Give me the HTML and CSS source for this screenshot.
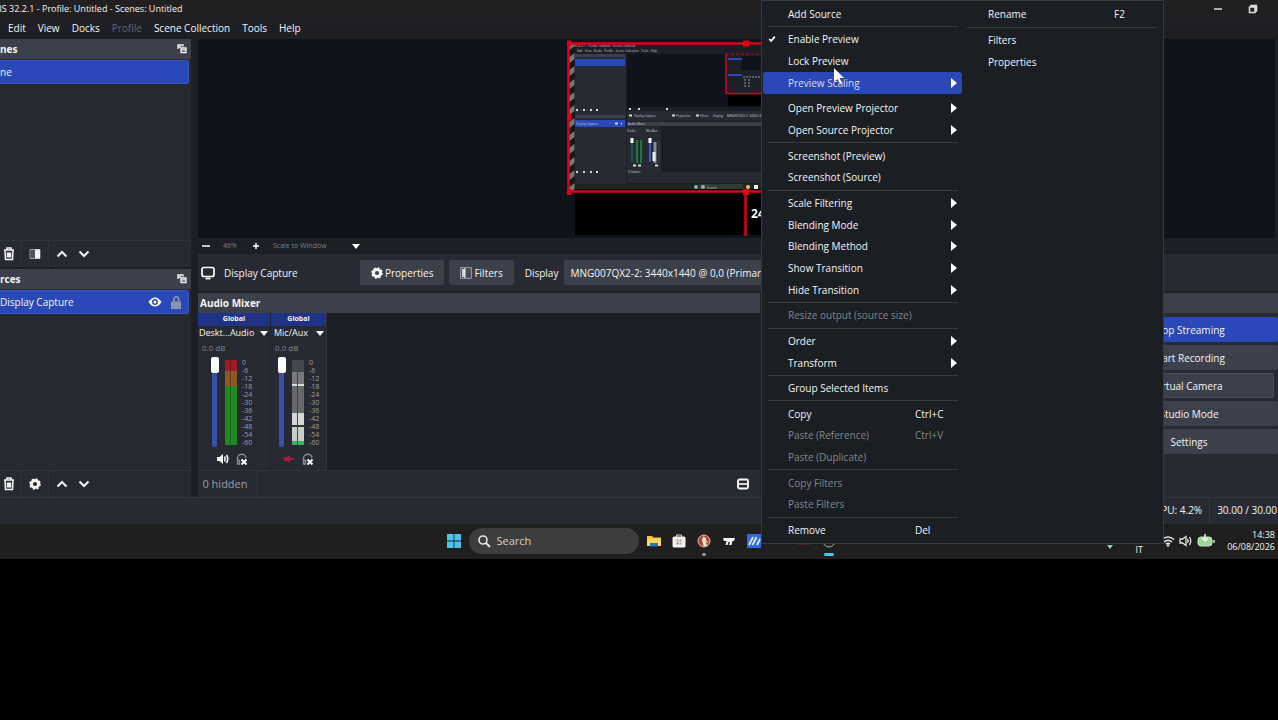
FILE: index.html
```
<!DOCTYPE html>
<html lang="en">
<head>
    <meta charset="utf-8">
    <title>OBS 32.2.1</title>
    <link rel="stylesheet" href="styles.css">
</head>
<body>
    <!-- shared icons -->
    <svg class="sprite" aria-hidden="true">
        <symbol id="i-float" viewBox="0 0 10 10"><path d="M1 5V1h5v1.500M1 3h3M4 8.500V4h5v4.500zM4 5.800h5" fill="none" stroke="currentColor" stroke-width="1.300"/></symbol>
        <symbol id="i-trash" viewBox="0 0 12 14"><path d="M1 3h10M4 3V1h4v2M2 3.500l.5 9h7l.5-9M4.500 5.500v5M7.500 5.500v5M6 5.500v5" fill="none" stroke="currentColor" stroke-width="1.500"/></symbol>
        <symbol id="i-filter" viewBox="0 0 12 12"><path d="M.7.700h10.600v10.600H.7z" fill="none" stroke="currentColor" stroke-opacity=".6"/><path d="M2 2h3v8H2z" fill="currentColor" opacity=".8"/><path d="M6 1.500h5v9H6z" fill="#4a4e59"/><path d="M5 1v10" stroke="currentColor"/></symbol>
        <symbol id="i-panel" viewBox="0 0 12 12"><path d="M1 1.500h10v9H1z" fill="none" stroke="#9a9da4"/><path d="M2 2h4v8H2z" fill="#50545d"/><path d="M6 1.500h5v9H6z" fill="currentColor"/></symbol>
        <symbol id="i-up" viewBox="0 0 12 12"><path d="M1.500 8.500L6 4l4.500 4.500" fill="none" stroke="currentColor" stroke-width="2"/></symbol>
        <symbol id="i-down" viewBox="0 0 12 12"><path d="M1.500 3.500L6 8l4.500-4.500" fill="none" stroke="currentColor" stroke-width="2"/></symbol>
        <symbol id="i-gear" viewBox="0 0 12 12"><circle cx="6" cy="6" r="3.600" fill="none" stroke="currentColor" stroke-width="3"/><circle cx="6" cy="6" r="5" fill="none" stroke="currentColor" stroke-width="1.600" stroke-dasharray="2 1.930"/></symbol>
        <symbol id="i-head" viewBox="0 0 12 12"><path d="M1.500 10V6a4 4 0 0 1 8.500-1M1.500 7v4h2V7.500z" fill="none" stroke="#8a8d94" stroke-width="1.400"/><path d="M5.500 6.500l5 5m0-5l-5 5" stroke="#fff" stroke-width="2"/></symbol>
        <symbol id="i-speaker" viewBox="0 0 14 12"><path d="M1 4h2.500L7 1v10L3.500 8H1z" fill="currentColor"/><path d="M8.500 3.500q1.500 2.500 0 5M10.500 2q2.500 4 0 8" fill="none" stroke="currentColor" stroke-width="1.600"/></symbol>
    </svg>

    <div class="desktop">
        <header class="titlebar">
            <span class="title">BS 32.2.1 - Profile: Untitled - Scenes: Untitled</span>
            <button class="win-btn" aria-label="Minimize"><svg width="10" height="10" viewBox="0 0 10 10"><path d="M1 5h8" stroke="#ddd" stroke-width="1.500"/></svg></button>
            <button class="win-btn" aria-label="Restore"><svg width="10" height="10" viewBox="0 0 10 10"><path d="M1.500 3h5.500v5.500H1.500zM3 2.500V1.500h5.500V7H7.500" fill="none" stroke="#ddd" stroke-width="1.500"/></svg></button>
        </header>

        <nav class="menubar">
            <button>Edit</button>
            <button>View</button>
            <button>Docks</button>
            <button disabled>Profile</button>
            <button>Scene Collection</button>
            <button>Tools</button>
            <button>Help</button>
        </nav>

        <main class="work">
            <div class="side">
                <section class="dock">
                    <h2 class="dock-title">nes <svg width="10" height="10"><use href="#i-float"/></svg></h2>
                    <div class="list scenes-list">
                        <div class="row">ne</div>
                    </div>
                    <div class="tools">
                        <button aria-label="Remove scene"><svg width="12" height="14"><use href="#i-trash"/></svg></button>
                        <button aria-label="Scene filters"><svg width="12" height="12"><use href="#i-panel"/></svg></button>
                        <button class="arrow" aria-label="Move up"><svg width="12" height="12"><use href="#i-up"/></svg></button>
                        <button class="arrow" aria-label="Move down"><svg width="12" height="12"><use href="#i-down"/></svg></button>
                    </div>
                </section>
                <section class="dock">
                    <h2 class="dock-title">rces <svg width="10" height="10"><use href="#i-float"/></svg></h2>
                    <div class="list sources-list">
                        <div class="row">
                            <span class="row-name">Display Capture</span>
                            <button aria-label="Visible"><svg width="14" height="10" viewBox="0 0 14 10"><path d="M.5 5Q3.500.500 7 .5T13.500 5Q10.500 9.500 7 9.500T.5 5z" fill="#fff"/><circle cx="7" cy="5" r="3" fill="#2b48b8"/><circle cx="7" cy="5" r="1.500" fill="#fff"/></svg></button>
                            <button aria-label="Lock"><svg width="12" height="14" viewBox="0 0 12 14"><path d="M1 6.500h10V14H1z" fill="#8d93ab"/><path d="M4 7V4a2.300 2.300 0 0 1 4.600 0v3" fill="none" stroke="#8d93ab" stroke-width="1.600"/></svg></button>
                        </div>
                    </div>
                    <div class="tools">
                        <button aria-label="Remove source"><svg width="12" height="14"><use href="#i-trash"/></svg></button>
                        <button aria-label="Source properties"><svg width="12" height="12"><use href="#i-gear"/></svg></button>
                        <button class="arrow" aria-label="Move up"><svg width="12" height="12"><use href="#i-up"/></svg></button>
                        <button class="arrow" aria-label="Move down"><svg width="12" height="12"><use href="#i-down"/></svg></button>
                    </div>
                </section>
            </div>

            <div class="center">
                <div class="preview">
                    <svg class="canvas" width="596" height="200" viewBox="567 38 596 200">
                        <defs>
                            <pattern id="hatch" width="8" height="13" patternUnits="userSpaceOnUse"><path d="M0 0h8v13H0z" fill="#191919"/><path d="M0 6l8-6v6l-8 6z" fill="#777"/></pattern>
                        </defs>
                        <path d="M575 44h592v191H575z" fill="#000"/>
                        <path d="M575 44h592v145H575z" fill="#1b1e24"/>
                        <path d="M575 54h51v132h-51z" fill="#272b34"/>
                        <path d="M627 54h540v53H627z" fill="#10131b"/>
                        <path d="M575 54h50v3h-50zM575 115h50v3h-50zM627 122h540v4H627z" fill="#3a3f4a"/>
                        <path d="M575 59h50v7h-50zM575 120h50v7h-50z" fill="#2b48b8"/>
                        <path d="M627 111h540v10H627zM627 127h34v47h-34zM627 172h540v11H627z" fill="#262a32"/>
                        <path d="M575 184h592v5H575z" fill="#20231f"/>
                        <path d="M699 184h44v5h-44z" fill="#303c33"/>
                        <g class="mini">
                            <text x="573" y="47">BS 32.2.1 - Profile: Untitled - Scenes: Untitled</text>
                            <text x="577" y="52">Edit &#160; View &#160; Docks &#160; Profile &#160; Scene Collection &#160; Tools &#160; Help</text>
                            <text x="576" y="125">Display Capture</text>
                            <text x="634" y="117">Display Capture</text>
                            <text x="676" y="117">Properties</text>
                            <text x="700" y="117">Filters</text>
                            <text x="713" y="117">Display</text>
                            <text x="727" y="117">MNG007QX2-2: 3440x1440</text>
                            <text x="628" y="125">Audio Mixer</text>
                            <text x="627" y="132">Deskt...</text>
                            <text x="646" y="132">Mic/Aux</text>
                            <text x="628" y="173">0 hidden</text>
                            <text x="707" y="189">Search</text>
                        </g>
                        <path d="M576 110h2m5 0h2m5 0h2m4 0h2M576 172h2m5 0h2m5 0h2m4 0h2M615 123.500h3m3 0h1M633 165.500h3m2 0h3m14 0h3M629 109h2m7 0h2m26 0h2M629 115.500h3M672 115.500h3M696 115.500h3" stroke="#d5d8dc" stroke-width="2"/>
                        <path d="M632 142v20" stroke="#1d6c80"/>
                        <path d="M637 140v23M641 140v23" stroke="#1f7a3a" stroke-width="2"/>
                        <path d="M650 142v20" stroke="#3d56c0" stroke-width="2"/>
                        <path d="M655 142v21" stroke="#8b8d92" stroke-width="3"/>
                        <path d="M654 152v9" stroke="#eee" stroke-width="3"/>
                        <path d="M659 140v23" stroke="#5a5d64" stroke-dasharray="1 1"/>
                        <path d="M630.500 138h3v5h-3zM648.500 138h3v5h-3z" fill="#fff"/>
                        <circle cx="696" cy="187" r="2" fill="#7bb8b5"/><circle cx="703" cy="187" r="2" fill="#aaa"/>
                        <circle cx="748" cy="187" r="2" fill="#e8c55a"/><path d="M754 185h4v4h-4z" fill="#eee"/>
                        <path d="M726 54h80v40h-80z" fill="#1c2029"/>
                        <path d="M741 56h60v14h-60z" fill="#10131b"/>
                        <path d="M728 59h14M728 75h14" stroke="#2b48b8" stroke-width="2"/>
                        <path d="M743 77h18M745 79v9m4-9v9" stroke="#999" stroke-dasharray="2 1"/>
                        <path d="M726 54v39.500h80" fill="none" stroke="#d3001c" stroke-width="1.500"/>
                        <path d="M726 54h80" stroke="#d3001c" stroke-dasharray="3 2"/>
                        <path d="M728 95h80v11h-80z" fill="#000"/>
                        <path d="M569 44h5.500v147H569z" fill="url(#hatch)"/>
                        <path d="M1167 43.500H568.500v148H1167M745.500 191v45" fill="none" stroke="#dc0018" stroke-width="2.500"/>
                        <path d="M565.500 40.500h6v6h-6zM743 40.500h6v6h-6zM565.500 114h6v6h-6zM565.500 189h6v6h-6zM743 189h6v6h-6z" fill="#e0001a"/>
                        <text class="canvas-clock" x="751" y="218">24:00</text>
                    </svg>
                </div>
                <div class="zoombar">
                    <button aria-label="Zoom out"><svg width="8" height="8" viewBox="0 0 8 8"><path d="M0 4h8" stroke="#fff" stroke-width="1.500"/></svg></button>
                    <span class="zoom-value">46%</span>
                    <button aria-label="Zoom in"><svg width="8" height="8" viewBox="0 0 8 8"><path d="M1 4h6M4 1v6" stroke="#fff" stroke-width="1.500"/></svg></button>
                    <select aria-label="Preview scale"><option>Scale to Window</option></select>
                    <i class="caret"></i>
                </div>
                <div class="source-bar">
                    <svg width="14" height="14" viewBox="0 0 14 14"><rect x="1" y="1.500" width="12" height="9" rx="2" fill="none" stroke="#fff" stroke-width="1.700"/><path d="M4.500 12.500h5" stroke="#fff" stroke-width="1.800"/></svg>
                    <span class="source-name">Display Capture</span>
                    <button class="btn"><svg width="12" height="12"><use href="#i-gear"/></svg>Properties</button>
                    <button class="btn"><svg width="12" height="12"><use href="#i-filter"/></svg>Filters</button>
                    <label for="display">Display</label>
                    <select id="display"><option>MNG007QX2-2: 3440x1440 @ 0,0 (Primary Monitor)</option></select>
                </div>

                <div class="lower">
                    <section class="dock mixer">
                        <h2 class="dock-title">Audio Mixer</h2>
                        <div class="strips">
                            <div class="strip">
                                <div class="strip-group">Global</div>
                                <button class="strip-name">Deskt...Audio<i class="caret"></i></button>
                                <div class="db">0.0 dB</div>
                                <div class="fader">
                                    <input type="range" aria-label="Desktop Audio volume" value="100">
                                    <div class="meter meter-live"></div>
                                    <div class="scale"><span>0</span><span>-6</span><span>-12</span><span>-18</span><span>-24</span><span>-30</span><span>-36</span><span>-42</span><span>-48</span><span>-54</span><span>-60</span></div>
                                </div>
                                <div class="strip-btns">
                                    <button aria-label="Mute"><svg width="14" height="12"><use href="#i-speaker"/></svg></button>
                                    <button aria-label="Monitoring"><svg width="12" height="12"><use href="#i-head"/></svg></button>
                                </div>
                            </div>
                            <div class="strip strip-mic">
                                <div class="strip-group">Global</div>
                                <button class="strip-name">Mic/Aux<i class="caret"></i></button>
                                <div class="db">0.0 dB</div>
                                <div class="fader">
                                    <input type="range" aria-label="Mic/Aux volume" value="100">
                                    <div class="meter meter-muted"></div>
                                    <div class="scale"><span>0</span><span>-6</span><span>-12</span><span>-18</span><span>-24</span><span>-30</span><span>-36</span><span>-42</span><span>-48</span><span>-54</span><span>-60</span></div>
                                </div>
                                <div class="strip-btns">
                                    <button class="muted" aria-label="Unmute"><svg width="14" height="12" viewBox="0 0 14 12"><path d="M2 4h3l3-2v8L5 8H2zM8 5h4v2H8z" fill="currentColor"/></svg></button>
                                    <button aria-label="Monitoring"><svg width="12" height="12"><use href="#i-head"/></svg></button>
                                </div>
                            </div>
                        </div>
                        <div class="tools">
                            <button class="hidden-count">0 hidden</button>
                            <button class="layout" aria-label="Mixer layout"><svg width="12" height="12" viewBox="0 0 12 12"><rect x="1" y="1.500" width="10" height="9" rx="1.500" fill="none" stroke="#fff" stroke-width="1.800"/><path d="M2 6h8" stroke="#fff" stroke-width="1.600"/></svg></button>
                        </div>
                    </section>
                    <section class="dock transitions">
                        <h2 class="dock-title"></h2>
                    </section>
                    <section class="dock controls">
                        <h2 class="dock-title"></h2>
                        <div class="control-list">
                            <button class="btn btn-active">Stop Streaming</button>
                            <button class="btn">Start Recording</button>
                            <div class="split">
                                <button class="btn">Start Virtual Camera</button>
                            </div>
                            <button class="btn">Studio Mode</button>
                            <button class="btn">Settings</button>
                        </div>
                    </section>
                </div>
            </div>
        </main>

        <footer class="statusbar">
            <span>CPU: 4.2%</span>
            <span>30.00 / 30.00</span>
        </footer>

        <div class="taskbar">
            <div class="apps">
                <button aria-label="Start"><svg width="14" height="14" viewBox="0 0 14 14"><path d="M0 0h6.600v6.600H0zM7.400 0H14v6.600H7.400zM0 7.400h6.600V14H0zM7.400 7.400H14V14H7.400z" fill="#4cc2ee"/></svg></button>
                <label class="search">
                    <svg width="14" height="14" viewBox="0 0 14 14"><circle cx="6" cy="6" r="4" fill="none" stroke="#e6e6e6" stroke-width="1.600"/><path d="M9 9l4 4" stroke="#e6e6e6" stroke-width="1.800"/></svg>
                    <input type="text" placeholder="Search" aria-label="Search">
                </label>
                <button aria-label="Files"><svg width="14" height="14" viewBox="0 0 14 14"><path d="M0 2h5l1.500 1.500H14V12H0z" fill="#f5c33b"/><path d="M0 5h14v7H0z" fill="#fbd765"/><path d="M3 9h8v3.500H3z" fill="#2577c4"/></svg></button>
                <button aria-label="Store"><svg width="14" height="14" viewBox="0 0 14 14"><path d="M4.500 3V1h5v2" fill="none" stroke="#ddd"/><rect x=".5" y="2.500" width="13" height="11" rx="1.500" fill="#f1efef"/><path d="M4.500 5.500h2v2h-2z" fill="#d88"/><path d="M7.500 5.500h2v2h-2z" fill="#8a8"/><path d="M4.500 8.500h2v2h-2z" fill="#79b"/><path d="M7.500 8.500h2v2h-2z" fill="#bb8"/></svg></button>
                <button class="running" aria-label="Browser"><svg width="14" height="14" viewBox="0 0 14 14"><circle cx="7" cy="7" r="6" fill="#a84a32" stroke="#eab9a5"/><path d="M6 2.500q4 1 3 4l2 1-2 1 1 3.500H6.500L5 6z" fill="#f3e6dd"/><path d="M8 7.500h3v1.500H8z" fill="#d99a35"/></svg></button>
                <button aria-label="Media"><svg width="14" height="14" viewBox="0 0 14 14"><path d="M1 4h12l-1 3h-1.500l-1 4H7l1-3H6.500l-1 3H3.500l1-4H2z" fill="#f2f2f2"/></svg></button>
                <button aria-label="Editor"><svg width="14" height="14" viewBox="0 0 14 14"><path d="M0 0h14v14H0z" fill="#2f6bdd"/><path d="M2 11l4-8M5.500 11l4-8M10 11l3-6" fill="none" stroke="#dbe8ff" stroke-width="1.800"/></svg></button>
                <button aria-label="Mail"></button>
                <button aria-label="Recorder"><svg width="14" height="14" viewBox="0 0 14 14"><path d="M1 9h12v1.500H1z" fill="#7c2430"/></svg></button>
                <button class="current" aria-label="OBS"><svg width="14" height="14" viewBox="0 0 14 14"><circle cx="7" cy="7" r="6" fill="#222" stroke="#aaa"/></svg></button>
            </div>
            <div class="tray">
                <svg class="tray-low" width="8" height="6" viewBox="0 0 8 6"><path d="M1 1h6L4 5z" fill="#9fc9b0"/></svg>
                <span class="lang">IT</span>
                <svg width="14" height="12" viewBox="0 0 14 12"><path d="M1 4.500Q7-.5 13 4.500M3 7q4-3.500 8 0M5 9q2-1.500 4 0" fill="none" stroke="#e4e4e4" stroke-width="1.600"/><circle cx="7" cy="10.500" r="1.200" fill="#e4e4e4"/></svg>
                <svg class="volume" width="14" height="12" viewBox="0 0 14 12"><path d="M1 4h2.500L7 1.500v9L3.500 8H1z" fill="none" stroke="#e4e4e4" stroke-width="1.300"/><path d="M8.500 4q1.500 2 0 4M10.500 2q2.500 4 0 8" fill="none" stroke="#e4e4e4" stroke-width="1.300"/></svg>
                <svg width="18" height="14" viewBox="0 0 18 14"><rect x="1" y="3" width="14" height="9" rx="3" fill="#9ed59a" stroke="#c9e8c6"/><path d="M17 6v3" stroke="#c9e8c6" stroke-width="1.500"/><path d="M8 0v5m-3-1l3 3 3-3" fill="none" stroke="#f0fff0" stroke-width="1.500"/></svg>
                <div class="clock">14:38<br>06/08/2026</div>
            </div>
        </div>

        <!-- source context menu -->
        <div class="context" role="menu">
            <div class="context-col">
                <button role="menuitem">Add Source</button>
                <hr>
                <button role="menuitem"><svg class="check" width="8" height="8" viewBox="0 0 10 10"><path d="M1.500 5l2.500 2.500L8.500 2" fill="none" stroke="#fff" stroke-width="2.200"/></svg>Enable Preview</button>
                <button role="menuitem">Lock Preview</button>
                <button role="menuitem" class="sub hover">Preview Scaling</button>
                <hr class="blank">
                <button role="menuitem" class="sub">Open Preview Projector</button>
                <button role="menuitem" class="sub">Open Source Projector</button>
                <hr>
                <button role="menuitem">Screenshot (Preview)</button>
                <button role="menuitem">Screenshot (Source)</button>
                <hr>
                <button role="menuitem" class="sub">Scale Filtering</button>
                <button role="menuitem" class="sub">Blending Mode</button>
                <button role="menuitem" class="sub">Blending Method</button>
                <button role="menuitem" class="sub">Show Transition</button>
                <button role="menuitem" class="sub">Hide Transition</button>
                <hr>
                <button role="menuitem" disabled>Resize output (source size)</button>
                <hr>
                <button role="menuitem" class="sub">Order</button>
                <button role="menuitem" class="sub">Transform</button>
                <hr>
                <button role="menuitem">Group Selected Items</button>
                <hr>
                <button role="menuitem">Copy<kbd>Ctrl+C</kbd></button>
                <button role="menuitem" disabled>Paste (Reference)<kbd>Ctrl+V</kbd></button>
                <button role="menuitem" disabled>Paste (Duplicate)</button>
                <hr>
                <button role="menuitem" disabled>Copy Filters</button>
                <button role="menuitem" disabled>Paste Filters</button>
                <hr>
                <button role="menuitem">Remove<kbd>Del</kbd></button>
            </div>
            <div class="context-col">
                <button role="menuitem">Rename<kbd>F2</kbd></button>
                <hr>
                <button role="menuitem">Filters</button>
                <button role="menuitem">Properties</button>
            </div>
        </div>

        <svg class="cursor" width="12" height="18" viewBox="0 0 12 18"><path d="M1 0v14l3.500-3 2.500 5 2-1-2.500-5H11z" fill="#fff"/></svg>
    </div>
</body>
</html>
```

FILE: styles.css
```
* { box-sizing: border-box; }
body { margin: 0; background: #000; color: #f4f5f6; font: 500 10px/16px "Open Sans", "Noto Sans", sans-serif; overflow: hidden; }
button, input, select { font: inherit; color: inherit; background: none; border: none; margin: 0; padding: 0; }
button { display: flex; align-items: center; white-space: nowrap; }
svg { display: block; flex: none; }
.sprite { position: absolute; width: 0; height: 0; }

.desktop { position: relative; background: #1c1f25; }

/* window frame */
.titlebar { display: flex; align-items: center; gap: 25px; height: 18px; padding-right: 20px; background: #221f21; font-size: 9px; }
.title { flex: 1; margin-left: -4px; white-space: nowrap; }
.menubar { display: flex; gap: 12px; height: 20px; padding-left: 8px; background: #1e1f25; }
.menubar button:disabled { color: #62656b; }

.work { display: flex; gap: 7px; padding-top: 1px; }
.side { width: 191px; flex: none; display: flex; flex-direction: column; gap: 2px; }
.center { flex: 1; min-width: 0; display: flex; flex-direction: column; }

/* docks */
.dock { display: flex; flex-direction: column; background: #272a33; }
.dock-title { display: flex; align-items: center; justify-content: space-between; height: 20px; margin: 0; padding-right: 4px; background: #3c404b; font-size: 10px; font-weight: 700; }
.list { padding: 1px 2px 0 0; }
.scenes-list { height: 181px; }
.sources-list { height: 181px; }
.row { display: flex; align-items: center; gap: 8px; height: 24px; padding-right: 6px; background: #2b48b8; border: 1px solid #3a55bd; border-left: none; border-radius: 0 3px 3px 0; }
.row-name { flex: 1; }
.tools { display: flex; align-items: center; height: 27px; border-top: 1px solid #30343e; }
.tools button { justify-content: center; width: 27px; height: 26px; border-right: 1px solid #30343e; }
.tools button:first-child { width: 22px; padding-right: 4px; }
.tools .arrow { width: 22px; border: none; }
.tools :not(.arrow) + .arrow { margin-left: 2px; }

/* preview */
.preview { position: relative; height: 199px; margin-right: 3px; background: #10131a; overflow: hidden; }
.canvas { position: absolute; left: 369px; top: -1px; }
.mini { fill: #c9ccd2; font-size: 3px; }
.canvas-clock { fill: #fff; font-size: 12px; font-weight: 700; }
.caret { border: 4px solid transparent; border-top: 5px solid #fff; border-bottom: none; }
.zoombar { display: flex; align-items: center; gap: 13px; height: 16px; padding-left: 4px; color: #7b7f86; font-size: 7px; }
.zoombar select { width: 66px; appearance: none; }
.zoom-value { width: 16px; }
.source-bar { display: flex; align-items: center; height: 37px; padding-left: 3px; background: #272a33; }
.source-name { width: 145px; padding-left: 9px; }
.btn { justify-content: center; height: 25px; padding: 0 11px; background: #3c404b; border-radius: 2px; }
.source-bar .btn { gap: 2px; margin-right: 5px; }
.source-bar label { padding: 0 6px; }
.source-bar select { width: 300px; height: 25px; padding-left: 6px; background: #3c404b; appearance: none; border-radius: 2px; }

.lower { display: grid; grid-template-columns: 562fr 336fr 178fr; gap: 2px; padding-top: 2px; }

/* mixer */
.mixer .dock-title { padding-left: 2px; }
.strips { display: flex; height: 157px; background: #1c1f25; }
.strip { width: 72px; background: #272a33; }
.strip-mic { width: 57px; border-left: 1px solid #1f222a; border-right: 1px solid #30343e; }
.strip-group { height: 13px; background: #1f3286; text-align: center; font-size: 7px; line-height: 12px; font-weight: 700; }
.strip-name { width: 100%; height: 14px; justify-content: space-between; padding: 0 2px 0 1px; font-size: 9px; }
.db { padding-left: 4px; color: #858890; font-size: 8px; line-height: 16px; }
.strip-mic .strip-name { padding-left: 3px; }
.fader { display: flex; height: 92px; padding: 1px 0 0 12px; }
.strip-mic .fader { padding-left: 6px; }
.fader input { writing-mode: vertical-lr; direction: rtl; appearance: none; width: 8px; height: 90px; }
.fader input::-webkit-slider-runnable-track { width: 5px; height: 90px; margin: 0 auto; background: #3950ad; border-radius: 2px; }
.fader input::-webkit-slider-thumb { appearance: none; width: 8px; height: 16px; margin-left: -1px; background: #fff; border-radius: 2px; }
.meter { width: 12px; height: 85px; margin: 3px 5px 0 7px; }
.meter-live { background: linear-gradient(90deg, transparent 5px, rgba(0,0,0,.25) 5px, rgba(0,0,0,.25) 6px, transparent 6px), linear-gradient(#a01a22 0 11px, #8a5a22 11px 26px, #1f8a24 26px); }
.meter-muted { background: linear-gradient(90deg, transparent 5px, #444 5px, #444 6px, transparent 6px), linear-gradient(#44474c 0 12px, #77797d 12px 24px, #ddd 24px 26px, #66686c 26px 53px, #d5d5d5 53px 65px, #333 65px 67px, #c9cdca 67px 81px, #35b560 81px); }
.scale { display: flex; flex-direction: column; justify-content: space-between; height: 88px; margin-top: 2px; color: #9a9da4; font-size: 7px; line-height: 8px; }
.strip-btns { display: flex; gap: 6px; padding: 5px 0 0 18px; }
.strip-mic .strip-btns { padding-left: 11px; }
.muted { color: #b0173c; }
.tools .hidden-count, .tools .hidden-count:first-child { width: 60px; padding-right: 5px; color: #9a9da4; font-size: 11px; }
.tools .layout { margin-left: auto; border: none; width: 34px; }

/* controls */
.control-list { display: flex; flex-direction: column; gap: 3px; padding-top: 4px; }
.control-list .btn-active { background: #2b48b8; }
.split { display: flex; padding-right: 4px; }
.split .btn { flex: 1; padding-right: 34px; border: 1px solid #4a4e59; }

/* bottom bars */
.statusbar { display: flex; justify-content: flex-end; height: 27px; padding-right: 1px; background: #272a33; border-top: 1px solid #343842; line-height: 25px; }
.statusbar span + span { margin-left: 7px; padding-left: 7px; border-left: 1px solid #343842; }
.taskbar { display: grid; grid-template-columns: 1fr auto 1fr; align-items: center; height: 35px; padding-bottom: 1px; background: #1f1f1f; }
.apps { grid-column: 2; display: flex; align-items: center; gap: 11px; padding-left: 4px; }
.apps > button { position: relative; width: 14px; height: 14px; }
.apps > button:first-child { margin-right: -3px; }
.search { display: flex; align-items: center; gap: 6px; width: 170px; height: 26px; padding: 0 8px; margin-right: -3px; background: #3d3d3d; border-radius: 13px; font-size: 11px; }
.search input { width: 120px; outline: none; }
.search input::placeholder { color: #d0d0d0; opacity: 1; }
.running::after, .current::after { content: ''; position: absolute; left: 5px; bottom: -8px; width: 4px; height: 3px; border-radius: 2px; background: #999; }
.current::after { left: 2px; width: 10px; background: #4cc2ee; }
.tray { align-self: stretch; justify-self: end; display: flex; align-items: center; gap: 4px; padding-right: 3px; }
.tray-low { align-self: flex-end; margin-right: 18px; margin-bottom: 8px; }
.lang { align-self: flex-end; margin-right: 14px; font-size: 9px; }
.clock { width: 56px; text-align: right; font-size: 9px; line-height: 12px; white-space: nowrap; }

/* context menu over the window */
.context { position: absolute; top: 0; bottom: 15px; left: 761px; width: 403px; display: flex; padding: 2px 1px; background: #1b1e23; border: 1px solid #353941; }
.context-col { width: 199px; display: flex; flex-direction: column; }
.context-col button { position: relative; flex: 0 1 22px; min-height: 0; padding-left: 25px; border-radius: 3px; }
.context-col hr { flex: 0 1 4px; width: 190px; margin: 0 auto; border: none; background: linear-gradient(#353941, #353941) center / 100% 1px no-repeat; }
.context-col .blank { background: none; }
.context-col button:disabled { color: #83868c; }
.context-col .hover { background: #2b48b8; color: #d9def5; }
.context .sub::after { content: ''; margin-left: auto; margin-right: 5px; border: 5px solid transparent; border-left: 6px solid #fff; border-right: none; }
.context kbd { position: absolute; left: 152px; font: inherit; }
.context .check { position: absolute; left: 5px; }
.context-col + .context-col button { padding-left: 26px; }
.cursor { position: absolute; left: 833px; top: 68px; }
```
